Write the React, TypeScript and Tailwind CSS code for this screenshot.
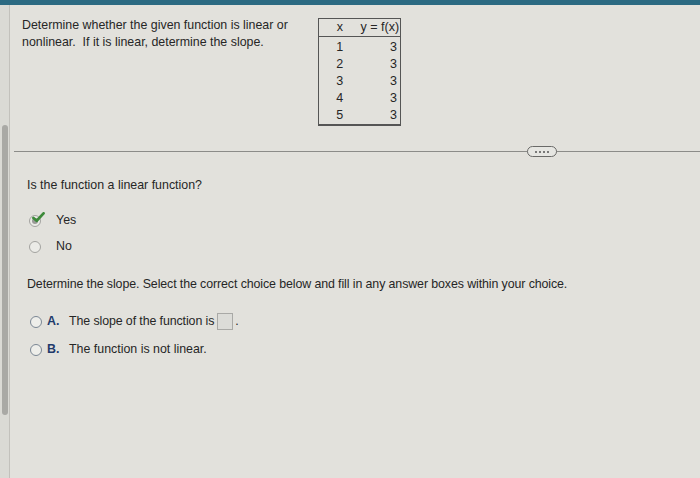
import React from 'react'

const font = { fontFamily: '"Liberation Sans", Arial, sans-serif' }

const rows = [1, 2, 3, 4, 5]

function Radio({ checked }: { checked?: boolean }) {
  return (
    <span className="relative inline-block w-[12px] h-[12px] rounded-full border border-[#a3a3a0] bg-[#ebebe7]">
      {checked && (
        <>
          <span className="absolute inset-[2px] rounded-full bg-[#9a9a97]" />
          <svg viewBox="0 0 14 12" className="absolute -top-[4px] left-[2px] w-[13px] h-[11px]">
            <path d="M1.5 6.5 L5 9.5 L12.5 1.5" fill="none" stroke="#3d8a3a" strokeWidth="3" strokeLinecap="round" strokeLinejoin="round" />
          </svg>
        </>
      )}
    </span>
  )
}

function ChoiceRadio() {
  return <span className="inline-block w-[12px] h-[12px] rounded-full border-[1.5px] border-[#7b8794] bg-[#eeeeea]" />
}

export default function App() {
  return (
    <div className="w-[700px] h-[478px] overflow-hidden bg-[#e2e1dc] text-[#262626]" style={font}>
      <div className="h-[5px] bg-[#2c6a82]" />
      <div className="flex h-[473px]">
        {/* scrollbar strip */}
        <div className="w-[10px] shrink-0 bg-[#dadad5] border-r border-[#c2c1bc] pt-[120px] pl-[2px]">
          <div className="w-[6px] h-[290px] rounded-[3px] bg-[#a9a9a5]" />
        </div>

        <div className="flex-1 flex flex-col">
          {/* question + table */}
          <div className="flex h-[141px] pt-[12px] pl-[12px]">
            <p className="w-[296px] text-[12.4px] leading-[17px]">
              Determine whether the given function is linear or nonlinear.&nbsp; If it is linear, determine the slope.
            </p>
            <table className="mt-[1px] h-fit border-collapse border-b-2 border-x border-[#555] text-[12.5px] leading-[17px] self-start whitespace-nowrap">
              <thead>
                <tr className="border-t border-b border-[#555]">
                  <th className="w-[42px] h-[18px] font-normal text-center">x</th>
                  <th className="w-[40px] pr-[1px] font-normal text-right">y = f(x)</th>
                </tr>
              </thead>
              <tbody>
                {rows.map((r, i) => (
                  <tr key={r}>
                    <td className={`text-center ${i === 0 ? 'pt-[2px]' : ''}`}>{r}</td>
                    <td className={`text-right pr-[3px] ${i === 0 ? 'pt-[2px]' : ''}`}>3</td>
                  </tr>
                ))}
              </tbody>
            </table>
          </div>

          {/* divider */}
          <div className="relative ml-[4px] h-[11px] flex items-center">
            <div className="w-full h-px bg-[#8c8c89]" />
            <div className="absolute left-[513px] top-0 w-[30px] h-[11px] rounded-full border border-[#6a6a68] bg-[#e6e6e2] flex items-center justify-center gap-[2px]">
              <span className="w-[2px] h-[2px] rounded-full bg-[#555]" />
              <span className="w-[2px] h-[2px] rounded-full bg-[#555]" />
              <span className="w-[2px] h-[2px] rounded-full bg-[#555]" />
              <span className="w-[2px] h-[2px] rounded-full bg-[#555]" />
            </div>
          </div>

          <div className="pl-[17px] text-[12.4px] leading-[17px]">
            <p className="mt-[20px]">Is the function a linear function?</p>

            <div className="mt-[18px] ml-[2px] flex items-center gap-[15px]">
              <Radio checked />
              <span>Yes</span>
            </div>
            <div className="mt-[9px] ml-[2px] flex items-center gap-[15px]">
              <Radio />
              <span>No</span>
            </div>

            <p className="mt-[21px] tracking-[-0.1px]">
              Determine the slope. Select the correct choice below and fill in any answer boxes within your choice.
            </p>

            <div className="mt-[20px] ml-[3px] flex items-center">
              <ChoiceRadio />
              <span className="ml-[5px] w-[22px] font-bold text-[#1f3a6b]">A.</span>
              <span className="tracking-[-0.1px]">The slope of the function is</span>
              <span className="ml-[3px] inline-block w-[16px] h-[17px] border border-[#a9a9a6] bg-[#dcdcd8]" />
              <span className="ml-[2px]">.</span>
            </div>
            <div className="mt-[11px] ml-[3px] flex items-center">
              <ChoiceRadio />
              <span className="ml-[5px] w-[22px] font-bold text-[#1f3a6b]">B.</span>
              <span>The function is not linear.</span>
            </div>
          </div>
        </div>
      </div>
    </div>
  )
}
